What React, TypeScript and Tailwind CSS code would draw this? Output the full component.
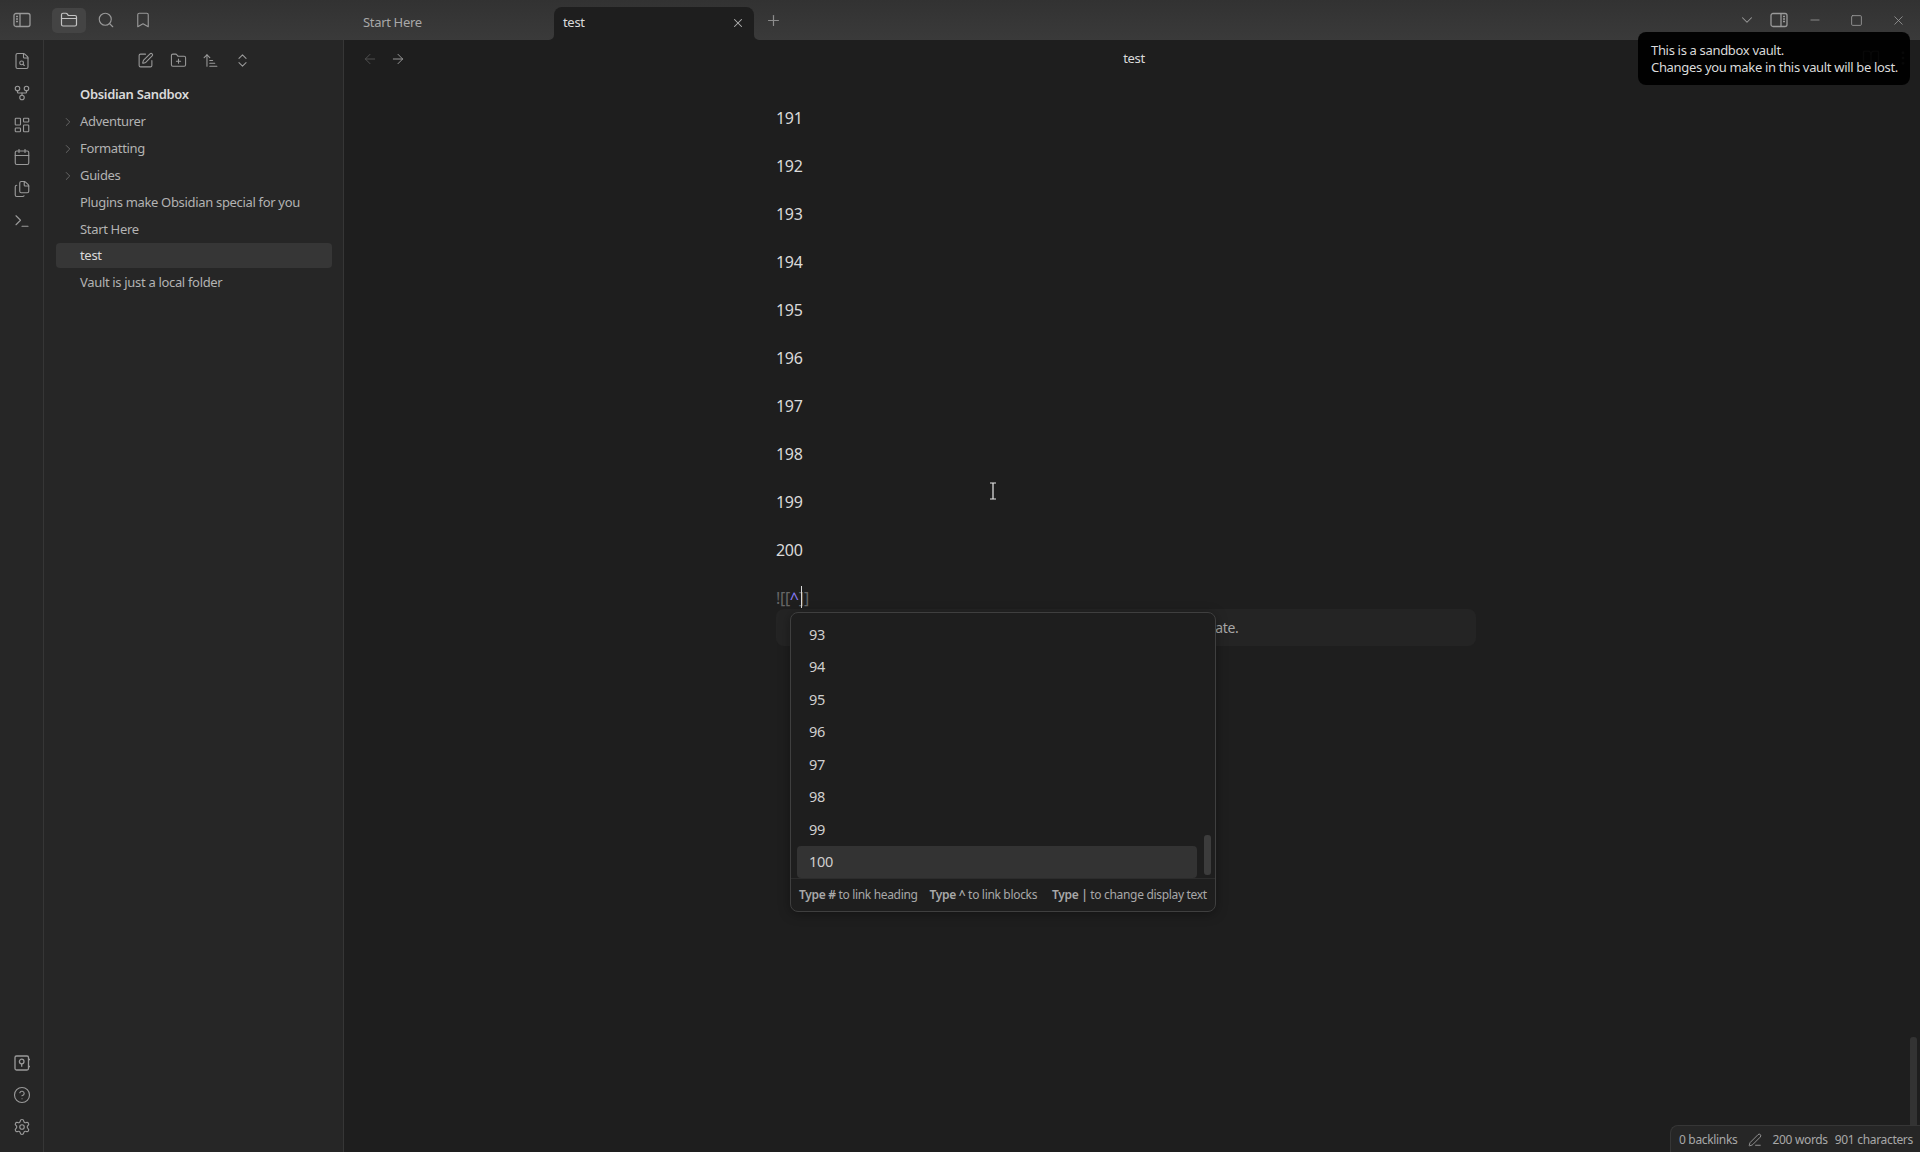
import { ArrowLeft, ArrowRight, ArrowUpNarrowWide, Bookmark, BookOpen, Calendar, ChevronDown, ChevronRight, ChevronsUpDown, CircleHelp, EllipsisVertical, FileSearch, Files, FolderClosed, FolderPlus, GitFork, LayoutDashboard, Minus, PenLine, Plus, Search, Settings, Square, SquarePen, Terminal, X } from "lucide-react";

const font = { fontFamily: "'Noto Sans', Inter, sans-serif" };

function SidebarLeft() {
  return (
    <svg width="18" height="18" viewBox="0 0 18 18" fill="none" stroke="currentColor" strokeWidth="1.3">
      <rect x="1" y="2.5" width="16" height="13" rx="2" />
      <path d="M7 2.5v13M3 5.5h2M3 8h2M3 10.5h2" />
    </svg>
  );
}

function SidebarRight() {
  return (
    <svg width="18" height="18" viewBox="0 0 18 18" fill="none" stroke="currentColor" strokeWidth="1.3">
      <rect x="1" y="2.5" width="16" height="13" rx="2" />
      <path d="M11 2.5v13M13 5.5h2M13 8h2M13 10.5h2" />
    </svg>
  );
}

function VaultIcon() {
  return (
    <svg width="18" height="18" viewBox="0 0 18 18" fill="none" stroke="currentColor" strokeWidth="1.3">
      <rect x="2" y="2" width="13.5" height="14" rx="1.5" />
      <circle cx="8.7" cy="7.5" r="2.3" />
      <path d="M8.7 9.8v3M15.5 5.5h1.5M15.5 12.5h1.5" />
    </svg>
  );
}

const tree = ["Adventurer", "Formatting", "Guides"];
const files = ["Plugins make Obsidian special for you", "Start Here"];
const lines = [191, 192, 193, 194, 195, 196, 197, 198, 199, 200];
const items = [93, 94, 95, 96, 97, 98, 99];

export default function App() {
  return (
    <div className="relative flex h-[1152px] w-[1920px] flex-col overflow-hidden bg-[#1e1e1e] text-[13px] tracking-[-0.025em] text-[#b3b3b3]" style={font}>
      {/* Title bar */}
      <div className="flex h-10 shrink-0 bg-gradient-to-b from-[#323232] to-[#3a3a3a]">
        <div className="flex w-[354px] shrink-0 items-center pl-[13px] text-[#999999]">
          <div className="flex w-[18px] justify-center"><SidebarLeft /></div>
          <div className="ml-[21px] flex h-[25px] w-[34px] items-center justify-center rounded-[5px] bg-[#444444] text-[#c4c4c4]">
            <FolderClosed size={18} strokeWidth={1.6} />
          </div>
          <div className="ml-[11px] flex w-[18px] justify-center"><Search size={18} strokeWidth={1.5} /></div>
          <div className="ml-[19px] flex w-[18px] justify-center"><Bookmark size={18} strokeWidth={1.5} /></div>
        </div>
        <div className="flex w-[200px] items-center pl-[9px] pt-[5px] text-[#a8a8a8]">Start Here</div>
        <div className="relative mt-[7px] flex w-[200px] items-center justify-between rounded-t-[8px] bg-[#1e1e1e] pb-[1px] pl-[9px] pr-[9px] text-[#dadada]">
          <span>test</span>
          <X size={14} strokeWidth={1.8} className="text-[#b0b0b0]" />
          <svg className="absolute bottom-0 left-[-5px]" width="5" height="5" viewBox="0 0 5 5" fill="#1e1e1e"><path d="M5 0v5H0a5 5 0 0 0 5-5z" /></svg>
          <svg className="absolute bottom-0 right-[-5px]" width="5" height="5" viewBox="0 0 5 5" fill="#1e1e1e"><path d="M0 0v5h5a5 5 0 0 1-5-5z" /></svg>
        </div>
        <div className="ml-[11px] flex items-center text-[#8c8c8c]"><Plus size={17} strokeWidth={1.7} /></div>
        <div className="ml-auto flex items-center text-[#9a9a9a]">
          <ChevronDown size={18} strokeWidth={1.4} />
          <div className="ml-[14px]"><SidebarRight /></div>
          <Minus size={14} strokeWidth={1.4} className="ml-[20px]" />
          <Square size={13} strokeWidth={1.6} className="ml-[28px]" />
          <X size={15} strokeWidth={1.3} className="ml-[28px] mr-[14px]" />
        </div>
      </div>

      <div className="flex min-h-0 flex-1">
        {/* Ribbon */}
        <div className="flex w-[44px] shrink-0 flex-col items-center border-r border-[#363636] bg-[#262626] pb-[16px] pt-[12px] text-[#9a9a9a]">
          <div className="flex flex-col gap-[14px]">
            <FileSearch size={18} strokeWidth={1.5} />
            <GitFork size={18} strokeWidth={1.5} />
            <LayoutDashboard size={18} strokeWidth={1.5} />
            <Calendar size={18} strokeWidth={1.5} />
            <Files size={18} strokeWidth={1.5} />
            <Terminal size={18} strokeWidth={1.5} />
          </div>
          <div className="mt-auto flex flex-col gap-[14px]">
            <VaultIcon />
            <CircleHelp size={18} strokeWidth={1.5} />
            <Settings size={18} strokeWidth={1.5} />
          </div>
        </div>

        {/* File sidebar */}
        <div className="flex w-[300px] shrink-0 flex-col border-r border-[#363636] bg-[#262626]">
          <div className="flex h-[36px] items-center pl-[93px] pt-[5px] text-[#9a9a9a]">
            <SquarePen size={17} strokeWidth={1.5} />
            <FolderPlus size={17} strokeWidth={1.5} className="ml-[16px]" />
            <ArrowUpNarrowWide size={17} strokeWidth={1.5} className="ml-[15px]" />
            <ChevronsUpDown size={17} strokeWidth={1.5} className="ml-[15px]" />
          </div>
          <div className="flex flex-col pl-[12px] pr-[11px] pt-[5px]">
            <div className="flex h-[27px] items-center pl-[24px] font-semibold text-[#dadada]">Obsidian Sandbox</div>
            {tree.map((t) => (
              <div key={t} className="relative flex h-[27px] items-center pl-[24px]">
                <ChevronRight size={14} strokeWidth={1.6} className="absolute left-[5px] text-[#6a6a6a]" />
                {t}
              </div>
            ))}
            {files.map((t) => (
              <div key={t} className="flex h-[27px] items-center pl-[24px]">{t}</div>
            ))}
            <div className="flex h-[25px] items-center rounded-[4px] bg-[#363636] pl-[24px] text-[#dadada]">test</div>
            <div className="flex h-[29px] items-center pl-[24px]">Vault is just a local folder</div>
          </div>
        </div>

        {/* Editor */}
        <div className="relative flex min-w-0 flex-1 flex-col pr-[12px]">
          <div className="relative flex h-[36px] shrink-0 items-center justify-center pl-[16px] pt-[1px] text-[#dadada]">
            <div className="absolute left-[18px] top-[11px] flex gap-[12px]">
              <ArrowLeft size={16} strokeWidth={1.5} className="text-[#4f4f4f]" />
              <ArrowRight size={16} strokeWidth={1.5} className="text-[#969696]" />
            </div>
            test
            <div className="absolute right-[-4px] top-[9px] flex items-center gap-[14px] text-[#8a8a8a]">
              <BookOpen size={18} strokeWidth={1.4} />
              <EllipsisVertical size={18} strokeWidth={1.4} />
            </div>
          </div>
          <div className="mx-auto flex w-[700px] flex-col pt-[30px] text-[16px] leading-[24px] text-[#dadada]">
            {lines.map((n) => (
              <div key={n} className="mb-[24px] h-[24px]">{n}</div>
            ))}
            <div className="relative h-[24px] text-[#666666]">
              <span>![[</span>
              <span className="text-[#8a7cf8]">^</span>
              <span className="absolute left-[25px] top-0 h-[22px] w-[1px] bg-[#dadada]" />
              <span className="tracking-normal">]]</span>
            </div>
            <div className="mt-[-1px] flex h-[37px] items-center justify-center rounded-[8px] bg-[#242424] text-[14px] text-[#a8a8a8]">
              “^” is not created yet. Click to create.
            </div>
          </div>
        </div>
      </div>

      {/* Link suggestion popover */}
      <div className="absolute left-[790px] top-[612px] flex h-[300px] w-[426px] flex-col rounded-[8px] border border-[#3f3f3f] bg-[#1e1e1e] shadow-[0_2px_12px_rgba(0,0,0,0.35)]">
        <div className="relative flex-1 pl-[6px] pr-[18px] pt-[5px] text-[14.5px] text-[#cfcfcf]">
          {items.map((n) => (
            <div key={n} className="flex h-[32.5px] items-center pl-[12px] pt-[1px]">{n}</div>
          ))}
          <div className="flex h-[32px] items-center rounded-[4px] bg-[#333333] pl-[12px]">100</div>
          <div className="absolute right-[4px] top-[222px] h-[40px] w-[7px] rounded-[3px] bg-[#3c3c3c]" />
        </div>
        <div className="flex h-[33px] shrink-0 items-center whitespace-nowrap border-t border-[#2c2c2c] pl-[8px] text-[12px] text-[#a8a8a8]">
          <span><b className="font-semibold">Type #</b> to link heading</span>
          <span className="ml-[12px]"><b className="font-semibold">Type ^</b> to link blocks</span>
          <span className="ml-[15px]"><b className="font-semibold">Type |</b> to change display text</span>
        </div>
      </div>

      {/* Sandbox notice */}
      <div className="absolute left-[1638px] top-[32px] flex h-[53px] w-[272px] flex-col justify-center whitespace-nowrap rounded-[8px] bg-[rgba(0,0,0,0.94)] pl-[13px] text-[13px] leading-[17px] text-[#dadada]">
        <span>This is a sandbox vault.</span>
        <span>Changes you make in this vault will be lost.</span>
      </div>

      {/* Editor scrollbar */}
      <div className="absolute left-[1910px] top-[1037px] h-[90px] w-[7px] rounded-t-[3px] bg-[#333333]" />

      {/* Status bar */}
      <div className="absolute bottom-0 right-0 flex h-[27px] w-[250px] items-center whitespace-nowrap rounded-tl-[8px] border-l border-t border-[#363636] bg-[#262626] pl-[8px] pt-[1px] text-[12px] text-[#a8a8a8]">
        <span>0 backlinks</span>
        <PenLine size={14} strokeWidth={1.4} className="ml-[11px]" />
        <span className="ml-[10px]">200 words</span>
        <span className="ml-[7px]">901 characters</span>
      </div>

      {/* Mouse text cursor */}
      <svg className="absolute left-[989px] top-[482px]" width="8" height="18" viewBox="0 0 8 18" fill="none" stroke="#e8e8e8" strokeWidth="1.2">
        <path d="M1 1h6M1 17h6M4 1v16" />
      </svg>
    </div>
  );
}
